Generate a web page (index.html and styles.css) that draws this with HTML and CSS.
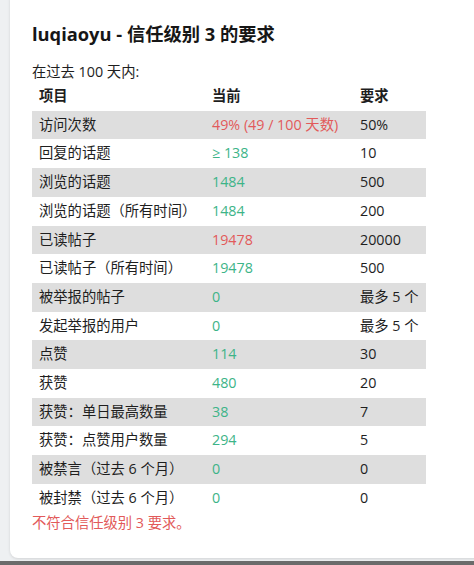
FILE: index.html
```html
<!DOCTYPE html>
<html lang="zh">
<head>
<meta charset="utf-8">
<link rel="stylesheet" href="styles.css">
</head>
<body>
<div class="page">
  <div class="card">
    <h2 class="title">luqiaoyu - 信任级别 3 的要求</h2>
    <p class="intro">在过去 100 天内:</p>
    <table class="reqs">
      <thead>
        <tr><th class="c1">项目</th><th class="c2">当前</th><th class="c3">要求</th></tr>
      </thead>
      <tbody>
        <tr class="odd"><td>访问次数</td><td class="bad">49% (49 / 100 天数)</td><td>50%</td></tr>
        <tr><td>回复的话题</td><td class="ok">≥ 138</td><td>10</td></tr>
        <tr class="odd"><td>浏览的话题</td><td class="ok">1484</td><td>500</td></tr>
        <tr><td>浏览的话题（所有时间）</td><td class="ok">1484</td><td>200</td></tr>
        <tr class="odd"><td>已读帖子</td><td class="bad">19478</td><td>20000</td></tr>
        <tr><td>已读帖子（所有时间）</td><td class="ok">19478</td><td>500</td></tr>
        <tr class="odd"><td>被举报的帖子</td><td class="ok">0</td><td>最多 5 个</td></tr>
        <tr><td>发起举报的用户</td><td class="ok">0</td><td>最多 5 个</td></tr>
        <tr class="odd"><td>点赞</td><td class="ok">114</td><td>30</td></tr>
        <tr><td>获赞</td><td class="ok">480</td><td>20</td></tr>
        <tr class="odd"><td>获赞：单日最高数量</td><td class="ok">38</td><td>7</td></tr>
        <tr><td>获赞：点赞用户数量</td><td class="ok">294</td><td>5</td></tr>
        <tr class="odd"><td>被禁言（过去 6 个月）</td><td class="ok">0</td><td>0</td></tr>
        <tr><td>被封禁（过去 6 个月）</td><td class="ok">0</td><td>0</td></tr>
      </tbody>
    </table>
    <p class="result">不符合信任级别 3 要求。</p>
  </div>
</div>
<div class="bottombar"></div>
</body>
</html>
```
FILE: styles.css
```css
html, body {
  margin: 0;
  padding: 0;
  height: 565px;
  overflow: hidden;
  background: #eef0f2;
  font-family: "Open Sans", "Noto Sans CJK SC", sans-serif;
  color: #1e1e1e;
}
.page {
  padding-left: 10px;
  height: 561px;
  overflow: hidden;
}
.card {
  margin-top: -10px;
  width: 480px;
  background: #fff;
  border-radius: 8px;
  box-shadow: 0 1px 3px rgba(0,0,0,0.12);
  padding: 31px 22px 25px;
  box-sizing: border-box;
}
.title {
  margin: 0;
  font-size: 18.3px;
  line-height: 25px;
  font-weight: 700;
  color: #161616;
}
.intro {
  margin: 15px 0 0;
  font-size: 14.3px;
  line-height: 21px;
}
.reqs {
  border-collapse: collapse;
  width: 394px;
  font-size: 14.3px;
}
.reqs th, .reqs td {
  padding: 4px 7px;
  line-height: 20.7px;
  text-align: left;
  white-space: nowrap;
}
.reqs th { font-weight: 700; }
.c1 { width: 159px; }
.c2 { width: 134px; }
.reqs tr.odd td { background: #dedede; }
.bad { color: #e25a5a; }
.ok { color: #3db488; }
.result {
  margin: 0;
  font-size: 14.3px;
  line-height: 20px;
  color: #e25a5a;
}
.bottombar {
  height: 4px;
  background: #6b6b6b;
}
```
